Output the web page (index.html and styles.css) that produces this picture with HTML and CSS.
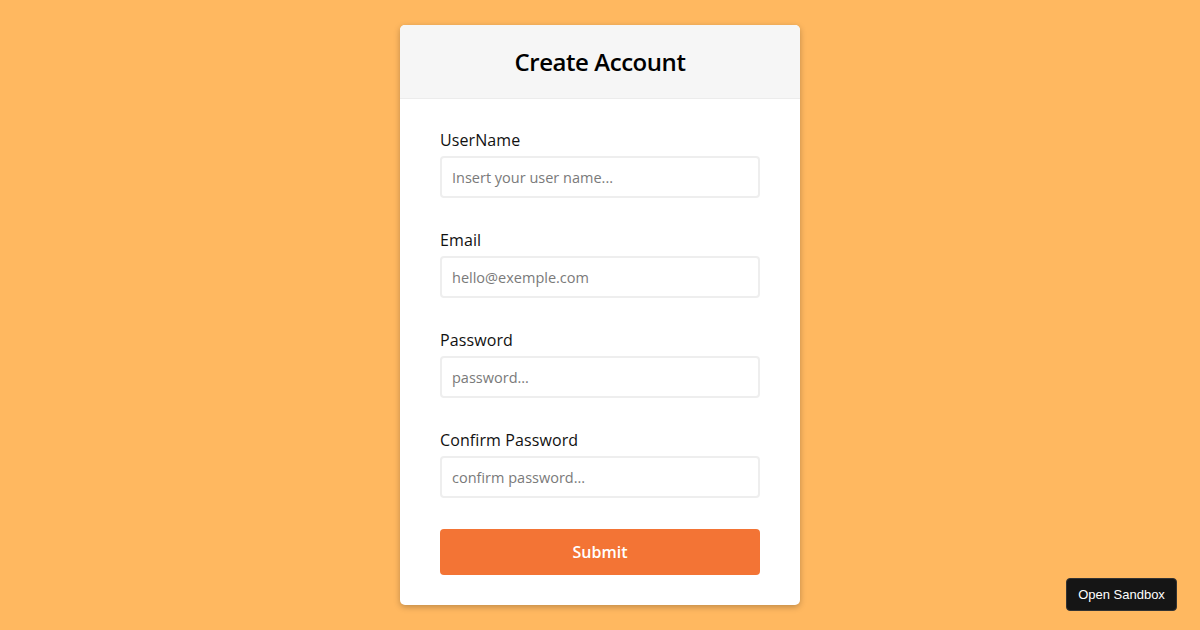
FILE: index.html
```html
<!DOCTYPE html>
<html>
<head>
<meta charset="utf-8">
<link rel="stylesheet" href="styles.css">
</head>
<body>
<div class="page">
  <div class="card">
    <div class="card-header"><h1>Create Account</h1></div>
    <form class="card-body">
      <div class="field">
        <label>UserName</label>
        <input type="text" placeholder="Insert your user name...">
      </div>
      <div class="field">
        <label>Email</label>
        <input type="text" placeholder="hello@exemple.com">
      </div>
      <div class="field">
        <label>Password</label>
        <input type="password" placeholder="password...">
      </div>
      <div class="field">
        <label>Confirm Password</label>
        <input type="password" placeholder="confirm password...">
      </div>
      <button type="button" class="submit">Submit</button>
    </form>
  </div>
</div>
<a class="sandbox">Open Sandbox</a>
</body>
</html>
```
FILE: styles.css
```css
html, body { margin: 0; padding: 0; }
body {
  background: #ffb860;
  font-family: "Open Sans", sans-serif;
  width: 1200px;
  height: 630px;
  overflow: hidden;
  position: relative;
}
.page {
  display: flex;
  justify-content: center;
  padding-top: 25px;
}
.card {
  width: 400px;
  background: #fff;
  border-radius: 5px;
  box-shadow: 0 2px 6px rgba(0,0,0,0.25);
  overflow: hidden;
}
.card-header {
  background: #f6f6f6;
  border-bottom: 1px solid #ececec;
  height: 73px;
  display: flex;
  align-items: center;
  justify-content: center;
}
.card-header h1 {
  margin: 0;
  font-size: 24px;
  font-weight: 600;
  color: #000;
  letter-spacing: -0.45px;
}
.card-body {
  padding: 29px 40px 30px;
  display: flex;
  flex-direction: column;
}
.field {
  display: flex;
  flex-direction: column;
  margin-bottom: 30px;
}
.field label {
  font-size: 16px;
  line-height: 24px;
  color: #111;
  margin-bottom: 4px;
  letter-spacing: 0.1px;
}
.field input {
  height: 42px;
  box-sizing: border-box;
  border: 2px solid #eeeeee;
  border-radius: 4px;
  padding: 0 10px;
  font-family: "Open Sans", sans-serif;
  font-size: 14.5px;
  color: #333;
  outline: none;
}
.field input::placeholder { color: #7a7a7a; }
.field:last-of-type { margin-bottom: 31px; }
.submit {
  height: 46px;
  border: none;
  border-radius: 4px;
  background: #f37435;
  color: #fff;
  font-family: "Open Sans", sans-serif;
  font-size: 16px;
  font-weight: 600;
}
.sandbox {
  position: absolute;
  left: 1066px;
  top: 578px;
  width: 111px;
  height: 33px;
  box-sizing: border-box;
  background: #151515;
  border: 1px solid #333;
  border-radius: 4px;
  color: #fff;
  font-family: "Liberation Sans", Arial, sans-serif;
  font-size: 13px;
  display: flex;
  align-items: center;
  justify-content: center;
}
```
